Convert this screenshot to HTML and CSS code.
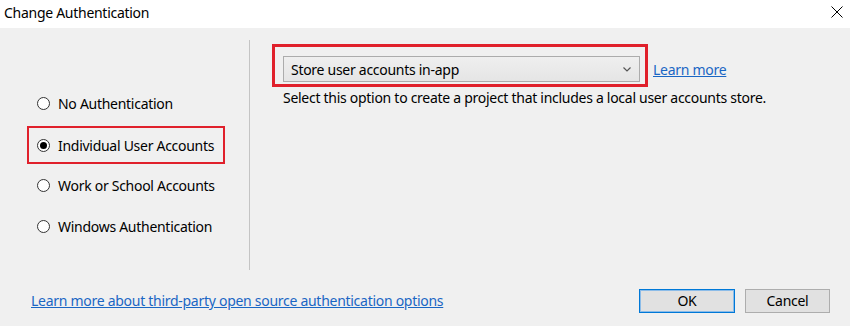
FILE: index.html
```html
<!DOCTYPE html>
<html lang="en">
<head>
    <meta charset="UTF-8">
    <title>Change Authentication</title>
    <link rel="stylesheet" href="styles.css">
</head>
<body>
    <div class="dialog">
        <div class="titlebar">
            <span class="title">Change Authentication</span>
            <svg class="close" width="12" height="12" viewBox="0 0 12 12">
                <path d="M0.5 0.5 L11.5 11.5 M11.5 0.5 L0.5 11.5" stroke="#000" stroke-width="1" fill="none"/>
            </svg>
        </div>

        <div class="main">
            <div class="options">
                <label class="option"><span class="radio"></span>No Authentication</label>
                <label class="option marked"><span class="radio checked"></span>Individual User Accounts</label>
                <label class="option"><span class="radio"></span>Work or School Accounts</label>
                <label class="option"><span class="radio"></span>Windows Authentication</label>
            </div>

            <div class="details">
                <div class="select-row">
                    <div class="select-mark">
                        <div class="select">
                            <span>Store user accounts in-app</span>
                            <svg width="8" height="5" viewBox="0 0 8 5">
                                <path d="M0.5 0.5 L4 4 L7.5 0.5" stroke="#555" stroke-width="1.2" fill="none"/>
                            </svg>
                        </div>
                    </div>
                    <a class="link" href="#">Learn more</a>
                </div>
                <p class="hint">Select this option to create a project that includes a local user accounts store.</p>
            </div>
        </div>

        <div class="footer">
            <a class="link" href="#">Learn more about third-party open source authentication options</a>
            <div class="buttons">
                <button class="btn default">OK</button>
                <button class="btn cancel">Cancel</button>
            </div>
        </div>
    </div>
</body>
</html>
```

FILE: styles.css
```css
body {
    margin: 0;
    padding: 0;
    background-color: #f0f0f0;
    font-family: "Noto Sans", "Open Sans", sans-serif;
    font-size: 14px;
    letter-spacing: -0.28px;
    color: #000;
}
.dialog {
    width: 850px;
    height: 326px;
    display: flex;
    flex-direction: column;
}
.titlebar {
    height: 28px;
    box-sizing: border-box;
    background-color: #fff;
    display: flex;
    align-items: center;
    justify-content: space-between;
    padding: 0 7px 4px 4px;
}
.title {
    font-size: 14px;
}
.main {
    height: 247px;
    display: flex;
}
.options {
    width: 250px;
    height: 230px;
    margin-top: 12px;
    border-right: 1px solid #c4c4c4;
    padding-top: 43px;
    box-sizing: border-box;
    display: flex;
    flex-direction: column;
}
.option {
    height: 41px;
    display: flex;
    align-items: center;
    padding-left: 37px;
}
.option.marked {
    box-sizing: border-box;
    height: 38px;
    width: 198px;
    margin: 2px 0 1px 27px;
    padding-left: 8px;
    border: 2px solid #e0202b;
}
.radio {
    width: 13px;
    height: 13px;
    box-sizing: border-box;
    border: 1px solid #333;
    border-radius: 50%;
    background-color: #fff;
    margin-right: 8px;
    display: flex;
    align-items: center;
    justify-content: center;
}
.radio.checked::after {
    content: "";
    width: 7px;
    height: 7px;
    border-radius: 50%;
    background-color: #000;
}
.details {
    padding: 16px 0 0 22px;
}
.select-row {
    display: flex;
    align-items: center;
}
.select-mark {
    width: 376px;
    box-sizing: border-box;
    border: 3px solid #e0202b;
    padding: 9px 5px 2px 8px;
    margin-right: 5px;
}
.select {
    height: 26px;
    box-sizing: border-box;
    border: 1px solid #acacac;
    background: linear-gradient(#efefef, #e5e5e5);
    display: flex;
    align-items: center;
    justify-content: space-between;
    padding: 0 8px 0 7px;
}
.link {
    color: #1a66c4;
    text-decoration: underline;
}
.select-row .link {
    margin-top: 8px;
}
.hint {
    margin: 1px 0 0 11px;
}
.footer {
    flex: 1;
    display: flex;
    align-items: center;
    justify-content: space-between;
    padding: 0 20px 0 31px;
}
.buttons {
    display: flex;
    gap: 10px;
}
.btn {
    height: 24px;
    font-family: inherit;
    font-size: 14px;
    letter-spacing: inherit;
    background-color: #e1e1e1;
    border: 1px solid #adadad;
    padding: 0;
}
.btn.default {
    width: 96px;
    border-color: #0078d7;
    box-shadow: inset 0 0 0 1px #8cbce8;
}
.btn.cancel {
    width: 85px;
}
```
